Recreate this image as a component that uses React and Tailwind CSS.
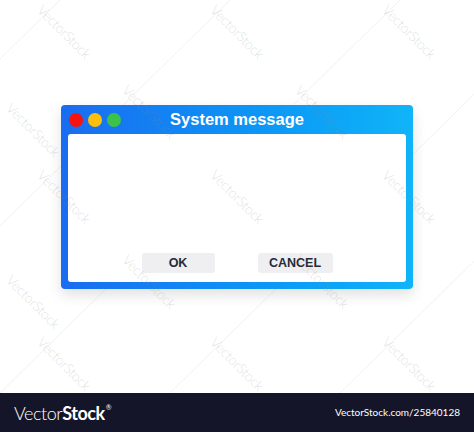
import React from 'react'

const marks = [
  [65, 30], [238, 30], [410, 30],
  [150, 110], [323, 110], [34, 128],
  [65, 195], [238, 195], [410, 195],
  [150, 280], [323, 280], [34, 300],
  [65, 362], [238, 362], [410, 362],
]

const Watermark = ({ x, y }) => (
  <span
    className="pointer-events-none absolute z-10 whitespace-nowrap text-[14px] font-light tracking-tight text-[rgba(140,140,140,0.28)]"
    style={{ left: x - 35, top: y - 9, transform: 'rotate(45deg)', fontFamily: 'Lato, sans-serif' }}
  >
    VectorStock
  </span>
)

export default function App() {
  return (
    <div
      className="flex h-[432px] w-[474px] flex-col overflow-hidden bg-white"
      style={{ fontFamily: '"Liberation Sans", Arial, sans-serif' }}
    >
      <div className="relative h-[393px] overflow-hidden pl-[61px] pt-[105px]">
        <svg className="pointer-events-none absolute inset-0" width="474" height="393">
          {[-40, 130, 300, 470, 640].map((o) => (
            <line key={o} x1={o - 300} y1="393" x2={o + 100} y2="0" stroke="#f1f1f1" strokeWidth="1" />
          ))}
        </svg>
        {marks.map(([x, y], i) => (
          <Watermark key={i} x={x} y={y} />
        ))}

        <div className="relative flex h-[184px] w-[352px] flex-col rounded-[4px] bg-gradient-to-r from-[#1a6cf0] to-[#10b4f8] px-[7px] pb-[7px] shadow-[0_6px_14px_rgba(0,0,0,0.12)]">
          <div className="grid h-[29px] grid-cols-[1fr_auto_1fr] items-center">
            <div className="flex items-center gap-[5px] pl-px">
              <span className="h-[14px] w-[14px] rounded-full bg-[#f5140f]" />
              <span className="h-[14px] w-[14px] rounded-full bg-[#fbbf0c]" />
              <span className="h-[14px] w-[14px] rounded-full bg-[#3cc24a]" />
            </div>
            <span className="text-[16.5px] font-bold text-white">System message</span>
            <div />
          </div>
          <div className="flex flex-1 items-end justify-center gap-[43px] rounded-[3px] bg-white pb-[9px]">
            <button className="flex h-[20px] w-[73px] items-center justify-center rounded-[3px] bg-[#efeff1] text-[12.5px] font-bold text-[#262b3a]">
              OK
            </button>
            <button className="flex h-[20px] w-[75px] items-center justify-center rounded-[3px] bg-[#efeff1] text-[12.5px] font-bold text-[#262b3a]">
              CANCEL
            </button>
          </div>
        </div>
      </div>

      <div className="flex h-[39px] items-center justify-between bg-[#15152a] pl-[14px] pr-[14px] text-white">
        <div className="flex items-start leading-none" style={{ fontFamily: 'Lato, sans-serif' }}>
          <span className="text-[18px] font-light tracking-tight">Vector</span>
          <span className="text-[18px] font-bold tracking-tight">Stock</span>
          <span className="ml-px text-[7px]">®</span>
        </div>
        <span className="text-[10px]" style={{ fontFamily: 'Lato, sans-serif' }}>
          VectorStock.com/25840128
        </span>
      </div>
    </div>
  )
}
